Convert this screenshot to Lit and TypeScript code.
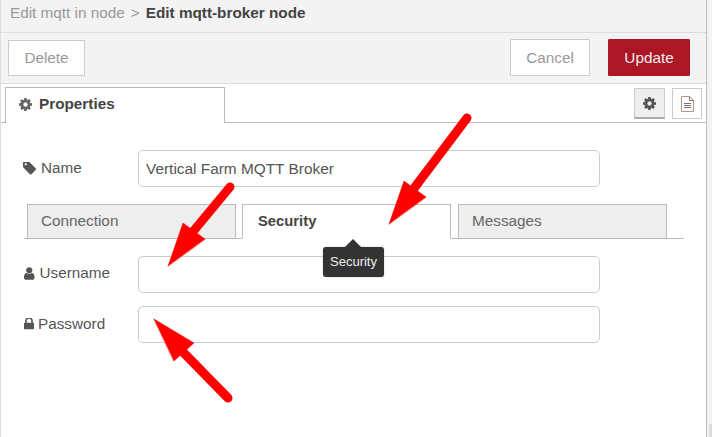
import { LitElement, html, css, svg } from "lit";
import { customElement } from "lit/decorators.js";

const cog = svg`<path d="M1152 896q0-106-75-181t-181-75-181 75-75 181 75 181 181 75 181-75 75-181zm512-109v222q0 12-8 23t-20 13l-185 28q-19 54-39 91 35 50 107 138 10 12 10 25t-9 23q-27 37-99 108t-94 71q-12 0-26-9l-138-108q-44 23-91 38-16 136-29 186-7 28-36 28h-222q-14 0-24.500-8.500t-11.500-21.500l-28-184q-49-16-90-37l-141 107q-10 9-25 9-14 0-25-11-126-114-165-168-7-10-7-23 0-12 8-23 15-21 51-66.500t54-70.500q-27-50-41-99l-183-27q-13-2-21-12.500t-8-23.500v-222q0-12 8-23t19-13l186-28q14-46 39-92-40-57-107-138-10-12-10-24 0-10 9-23 26-36 98.500-107.500t94.500-71.500q13 0 26 10l138 107q44-23 91-38 16-136 29-186 7-28 36-28h222q14 0 24.500 8.500t11.500 21.500l28 184q49 16 90 37l142-107q9-9 24-9 13 0 25 10 129 119 165 170 7 8 7 22 0 12-8 23-15 21-51 66.500t-54 70.500q26 50 41 98l183 28q13 2 21 12.500t8 23.500z"/>`;
const tag = svg`<path d="M576 448q0-53-37.500-90.500t-90.500-37.500-90.500 37.500-37.500 90.500 37.500 90.500 90.500 37.500 90.500-37.500 37.500-90.500zm1067 576q0 53-37 90l-491 492q-39 37-91 37-53 0-90-37l-715-716q-38-37-64.500-101t-26.500-117v-416q0-52 38-90t90-38h416q53 0 117 26.500t102 64.500l715 714q37 39 37 91z"/>`;
const user = svg`<path d="M1536 1399q0 109-62.500 187t-150.500 78h-854q-88 0-150.500-78t-62.500-187q0-85 8.500-160.500t31.500-152 58.500-131 94-89 134.500-34.500q131 128 313 128t313-128q76 0 134.500 34.500t94 89 58.500 131 31.500 152 8.500 160.500zm-256-887q0 159-112.500 271.500t-271.500 112.500-271.500-112.500-112.500-271.500 112.500-271.500 271.500-112.500 271.500 112.500 112.500 271.500z"/>`;
const lock = svg`<path d="M640 768h512v-192q0-106-75-181t-181-75-181 75-75 181v192zm832 96v576q0 40-28 68t-68 28h-960q-40 0-68-28t-28-68v-576q0-40 28-68t68-28h32v-192q0-184 132-316t316-132 316 132 132 316v192h32q40 0 68 28t28 68z"/>`;

const icon = (p: unknown, box: string, cls: string) =>
  html`<svg class=${cls} viewBox=${box} fill="currentColor">${p}</svg>`;
const COG_BOX = "128 128 1536 1536";

@customElement("app-root")
export class AppRoot extends LitElement {
  static styles = css`
    :host {
      display: block;
      width: 712px;
      height: 437px;
      position: relative;
      overflow: hidden;
      background: #f3f3f3;
      font-family: "Liberation Sans", Arial, sans-serif;
      font-size: 15.3px;
      color: #555;
    }
    .panel {
      box-sizing: border-box;
      width: 706px;
      height: 437px;
      margin-left: 1px;
      background: #fff;
      border-right: 1px solid #bbb;
      display: flex;
      flex-direction: column;
    }
    .crumbs {
      box-sizing: border-box;
      height: 33px;
      flex: none;
      background: #f3f3f3;
      border-bottom: 1px solid #ddd;
      padding: 0 0 7px 9px;
      display: flex;
      align-items: center;
      color: #999;
    }
    .crumbs .sep { margin: 0 6px; }
    .crumbs b { color: #444; }
    .actions {
      box-sizing: border-box;
      height: 51px;
      flex: none;
      background: #f3f3f3;
      border-bottom: 1px solid #ddd;
      padding: 6px 16px 0 7px;
      display: flex;
      align-items: flex-start;
    }
    .btn {
      box-sizing: border-box;
      height: 37px;
      background: #fff;
      border: 1px solid #ccc;
      color: #999;
      display: flex;
      align-items: center;
      justify-content: center;
    }
    .delete { width: 77px; margin-top: 1px; height: 36px; }
    .spacer { flex: 1; }
    .cancel { width: 80px; margin-right: 18px; border-radius: 1px; }
    .update { width: 82px; background: #ad1625; border-color: #ad1625; color: #eee; border-radius: 1px; }
    .tabbar {
      box-sizing: border-box;
      height: 39px;
      flex: none;
      border-bottom: 1px solid #bbb;
      padding: 3px 4px 0 4px;
      display: flex;
      align-items: flex-start;
    }
    .main-tab {
      box-sizing: border-box;
      width: 220px;
      height: 36px;
      background: #fff;
      border: 1px solid #bbb;
      border-bottom: none;
      display: flex;
      align-items: center;
      gap: 7px;
      padding: 0 0 3px 13px;
      font-weight: 700;
      color: #444;
    }
    .main-tab svg { width: 13px; height: 13px; color: #666; }
    .side {
      box-sizing: border-box;
      width: 30px;
      height: 31px;
      margin-top: 1px;
      border: 1px solid #ccc;
      display: flex;
      align-items: center;
      justify-content: center;
      background: #fff;
      color: #555;
    }
    .side.on { width: 31px; background: #eee; border-bottom: 2px solid #aaa; margin-right: 7px; }
    .side.on svg { width: 13px; height: 13px; }
    .side svg { width: 15px; height: 16px; }
    .form {
      flex: 1;
      padding: 27px 0 0 22px;
      display: flex;
      flex-direction: column;
      position: relative;
    }
    .row { display: flex; align-items: center; }
    .row label {
      width: 115px;
      flex: none;
      display: flex;
      align-items: center;
      gap: 5px;
      padding-bottom: 1px;
    }
    .row label .i-tag { width: 13px; height: 13px; }
    .row label .i-user { width: 10.500px; height: 13px; margin-left: 1px; }
    .row label .i-lock { width: 10px; height: 11.500px; margin-left: 1px; margin-right: -1px; }
    .row.user label { padding-bottom: 3px; }
    .input {
      box-sizing: border-box;
      width: 462px;
      height: 37px;
      border: 1px solid #ccc;
      border-radius: 5px;
      background: #fff;
      padding: 0 6px 0 7px;
      display: flex;
      align-items: center;
      color: #555;
      font-size: 15.400px;
    }
    .tabs {
      box-sizing: border-box;
      width: 660px;
      height: 35px;
      margin: 17px 0 17px 1px;
      padding-left: 3px;
      border-bottom: 1px solid #bbb;
      display: flex;
      gap: 6px;
    }
    .tab {
      box-sizing: border-box;
      height: 35px;
      background: #eee;
      border: 1px solid #bbb;
      padding: 0 0 2px 13px;
      display: flex;
      align-items: center;
      width: 209px;
      color: #666;
    }
    .tab.on {
      background: #fff;
      border-bottom-color: #fff;
      font-weight: 700;
      color: #444;
      padding-left: 15px;
      font-size: 14.800px;
      margin-right: 1px;
    }
    .pw { margin-top: 13px; }
    .tip {
      position: absolute;
      left: 322px;
      top: 124px;
      box-sizing: border-box;
      width: 61px;
      height: 30px;
      padding-bottom: 2px;
      background: #333;
      color: #eee;
      border-radius: 3px;
      font-size: 13px;
      display: flex;
      align-items: center;
      justify-content: center;
      box-shadow: 0 0 2px rgba(0,0,0,0.25);
    }
    .tip::before {
      content: "";
      position: absolute;
      left: 22px;
      top: -8px;
      border-left: 8px solid transparent;
      border-right: 8px solid transparent;
      border-bottom: 8px solid #333;
    }
    .arrows {
      position: absolute;
      left: 0;
      top: 0;
      width: 712px;
      height: 437px;
      pointer-events: none;
    }
    .scroll {
      position: absolute;
      right: 0;
      bottom: 0;
      width: 3px;
      height: 13px;
      background: #ddd;
    }
    .edge {
      position: absolute;
      left: 0;
      top: 0;
      width: 1px;
      height: 437px;
      background: #ddd;
    }
  `;

  render() {
    return html`
      <div class="edge"></div>
      <div class="panel">
        <div class="crumbs">
          <span>Edit mqtt in node</span><span class="sep">&gt;</span><b>Edit mqtt-broker node</b>
        </div>
        <div class="actions">
          <div class="btn delete">Delete</div>
          <div class="spacer"></div>
          <div class="btn cancel">Cancel</div>
          <div class="btn update">Update</div>
        </div>
        <div class="tabbar">
          <div class="main-tab">${icon(cog, COG_BOX, "")}<span>Properties</span></div>
          <div class="spacer"></div>
          <div class="side on">${icon(cog, COG_BOX, "")}</div>
          <div class="side">
            <svg viewBox="0 0 15 16" fill="none" stroke="#777" stroke-width="1">
              <path d="M1.500 .500h8l4 4v11h-12z" stroke="#a98"/>
              <path d="M9.500 .500v4h4M4 7.500h7M4 9.500h7M4 11.500h7"/>
            </svg>
          </div>
        </div>
        <div class="form">
          <div class="row">
            <label>${icon(tag, "128 192 1515 1515", "i-tag")}<span>Name</span></label>
            <div class="input">Vertical Farm MQTT Broker</div>
          </div>
          <div class="tabs">
            <div class="tab">Connection</div>
            <div class="tab on">Security</div>
            <div class="tab">Messages</div>
          </div>
          <div class="row user">
            <label>${icon(user, "256 128 1280 1536", "i-user")}<span>Username</span></label>
            <div class="input"></div>
          </div>
          <div class="row pw">
            <label>${icon(lock, "320 256 1152 1280", "i-lock")}<span>Password</span></label>
            <div class="input"></div>
          </div>
          <div class="tip">Security</div>
        </div>
      </div>
      <div class="scroll"></div>
      <svg class="arrows" viewBox="0 0 712 437">
        <g fill="#f00" stroke="#f00" stroke-linecap="round" stroke-linejoin="round">
          <path d="M467 118L412 191" stroke-width="9" fill="none"/>
          <path d="M389 224L404 181L426 197Z" stroke-width="0.5"/>
          <path d="M230 187L191 234" stroke-width="9" fill="none"/>
          <path d="M168 266L183 223L205 239Z" stroke-width="0.5"/>
          <path d="M228 398L180 349" stroke-width="9" fill="none"/>
          <path d="M154 319L194 343L174 361Z" stroke-width="0.5"/>
        </g>
      </svg>
    `;
  }
}
